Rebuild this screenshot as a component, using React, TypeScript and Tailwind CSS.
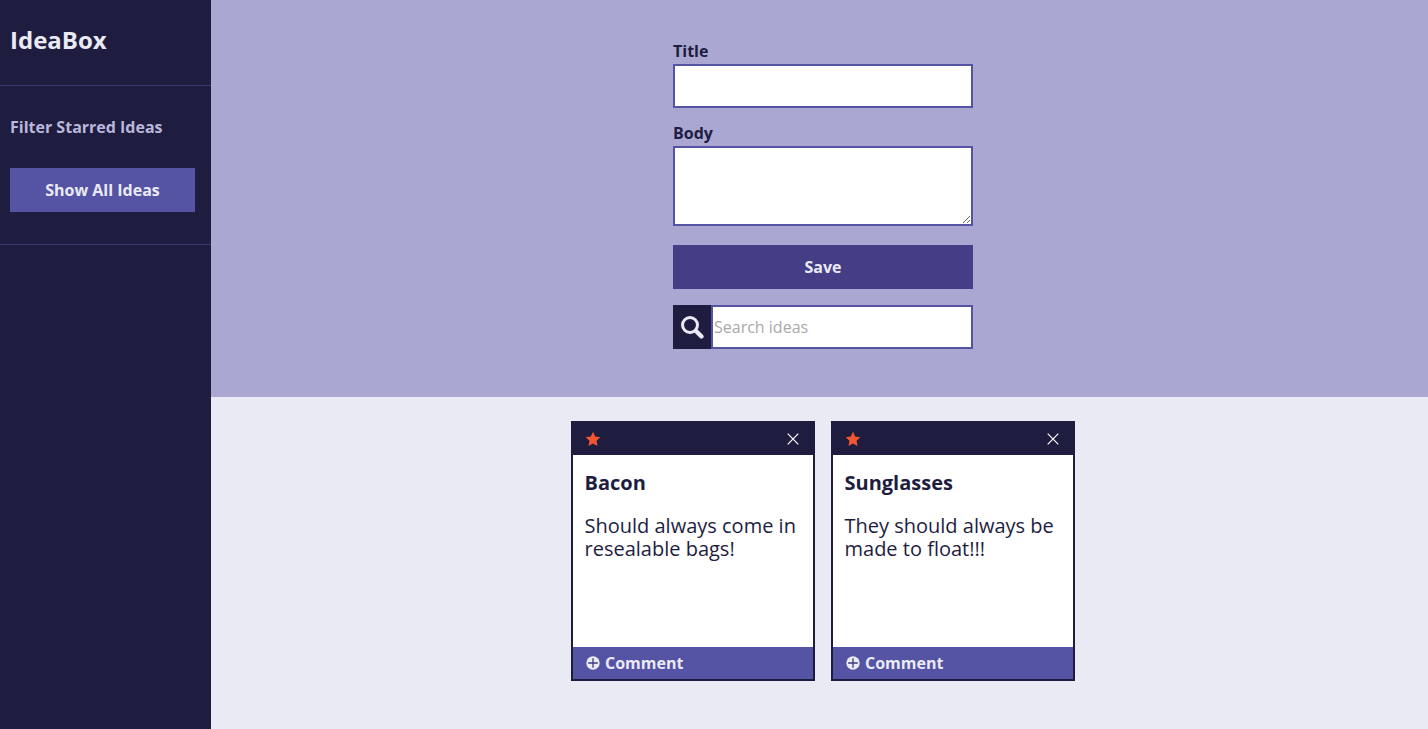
export default function App() {
  const ideas = [
    { title: "Bacon", body: "Should always come in resealable bags!" },
    { title: "Sunglasses", body: "They should always be made to float!!!" },
  ];
  return (
    <div className="flex h-[729px] w-full overflow-hidden bg-[#eaeaf4] font-['Open_Sans',sans-serif] text-[#1e1d3f]">
      <aside className="h-full w-[211px] shrink-0 bg-[#1e1d3f]">
        <div className="h-[86px] border-b border-[#3a3670] pl-[10px] pt-[22px]">
          <h1 className="text-[24px] font-bold leading-[36px] text-[#eaeaf4]">IdeaBox</h1>
        </div>
        <div className="h-[159px] border-b border-[#3a3670] pl-[10px] pr-4 pt-[30px]">
          <h2 className="text-[16px] font-bold leading-[22px] text-[#b9b7dc]">Filter Starred Ideas</h2>
          <button className="mt-[30px] h-[44px] w-[185px] bg-[#5453a4] text-[16px] font-bold leading-[22px] text-[#eaeaf4]">
            Show All Ideas
          </button>
        </div>
      </aside>
      <main className="min-w-0 flex-1">
        <section className="flex h-[397px] justify-center bg-[#aaa8d3] pl-[7px] pt-[40px]">
          <form className="w-[300px]">
            <label className="block text-[16px] font-bold leading-[22px]">Title</label>
            <input className="mt-[2px] block h-[44px] w-full border-2 border-[#5453a4] bg-white outline-none" />
            <label className="mt-[14px] block text-[16px] font-bold leading-[22px]">Body</label>
            <textarea className="mt-[2px] block h-[80px] w-full resize-y border-2 border-[#5453a4] bg-white outline-none" />
            <button type="button" className="mt-[19px] block h-[44px] w-full bg-[#453e87] text-[16px] font-bold leading-[22px] text-[#eaeaf4]">
              Save
            </button>
            <div className="mt-[16px] flex h-[44px]">
              <div className="flex w-[38px] shrink-0 items-center justify-center bg-[#1e1d3f]">
                <svg width="26" height="26" viewBox="0 0 26 26" fill="none" className="-ml-[1px]">
                  <circle cx="11" cy="11" r="7.5" stroke="#eaeaf4" strokeWidth="3" />
                  <path d="M17 17 L22.5 22.5" stroke="#eaeaf4" strokeWidth="4.4" strokeLinecap="round" />
                </svg>
              </div>
              <input
                placeholder="Search ideas"
                className="h-full min-w-0 flex-1 border-2 border-[#5453a4] bg-white pl-[1px] text-[16px] leading-[22px] outline-none placeholder:text-[#a9a9a9]"
              />
            </div>
          </form>
        </section>
        <section className="flex justify-center gap-[16px] pl-[7px] pt-[24px]">
          {ideas.map((idea) => (
            <article key={idea.title} className="flex h-[260px] w-[244px] flex-col border-2 border-[#1e1d3f] bg-white">
              <div className="flex h-[32px] shrink-0 items-center justify-between bg-[#1e1d3f] pl-[12px] pr-[14px]">
                <svg width="16" height="16" viewBox="0 0 24 24" fill="#f2552f">
                  <path d="M12 1.2l3.3 7.2 7.7.9-5.7 5.3 1.5 7.8L12 18.6l-6.8 3.8 1.5-7.8L1 9.3l7.7-.9z" />
                </svg>
                <svg width="12" height="12" viewBox="0 0 12 12" fill="none" stroke="#ffffff" strokeWidth="1.2">
                  <path d="M0.7 0.7 L11.3 11.3 M11.3 0.7 L0.7 11.3" />
                </svg>
              </div>
              <div className="min-h-0 flex-1 pl-[11.5px] pr-[11px] pt-[14px]">
                <h3 className="text-[20px] font-bold leading-[28px]">{idea.title}</h3>
                <p className="mt-[17px] text-[20px] leading-[23px]">{idea.body}</p>
              </div>
              <div className="flex h-[32px] shrink-0 items-center bg-[#5453a4] pl-[13px]">
                <svg width="14" height="14" viewBox="0 0 14 14" className="mr-[5px]">
                  <circle cx="7" cy="7" r="6.7" fill="#eaeaf4" />
                  <path d="M7 2.2 V11.8 M2.2 7 H11.8" stroke="#3d3a78" strokeWidth="1.3" />
                </svg>
                <span className="text-[16px] font-bold leading-[22px] text-[#eaeaf4]">Comment</span>
              </div>
            </article>
          ))}
        </section>
      </main>
    </div>
  );
}
